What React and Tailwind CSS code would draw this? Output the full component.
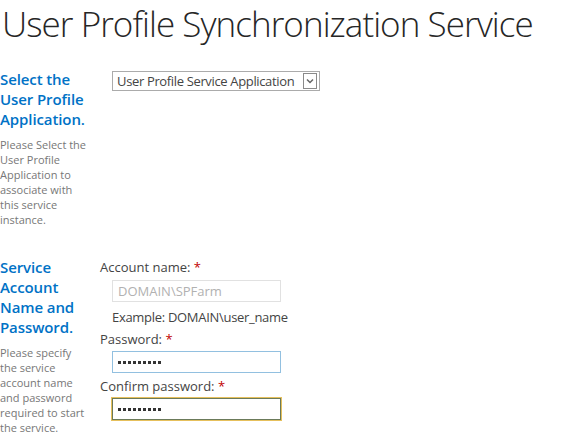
import React from "react";

const font = "font-['Open_Sans','Liberation_Sans',sans-serif]";

function SectionHead({ lines, desc }) {
  return (
    <div className="w-[100px] shrink-0 pr-[8px]">
      <div className="text-[15px] leading-[20px] font-semibold text-[#0072c6] tracking-[-0.1px]">
        {lines.map((l) => (
          <div key={l}>{l}</div>
        ))}
      </div>
      <div className="mt-[8px] text-[11px] leading-[15px] text-[#777]">
        {desc.map((l) => (
          <div key={l}>{l}</div>
        ))}
      </div>
    </div>
  );
}

function Label({ children }) {
  return (
    <div className="text-[13px] leading-[18px] text-[#444]">
      {children} <span className="text-[#bf0000]">*</span>
    </div>
  );
}

function Dots() {
  return (
    <div className="flex items-center gap-[2px]">
      {Array.from({ length: 9 }).map((_, i) => (
        <span key={i} className="block w-[3px] h-[3px] bg-[#333]" />
      ))}
    </div>
  );
}

export default function App() {
  return (
    <div className={`w-[581px] h-[440px] overflow-hidden bg-white ${font}`}>
      <h1 className="pl-[2px] pt-[1px] text-[35px] leading-[46px] font-light text-[#262626] tracking-[-0.95px] whitespace-nowrap">
        User Profile Synchronization Service
      </h1>

      {/* 选择应用 */}
      <div className="flex mt-[22px]">
        <SectionHead
          lines={["Select the", "User Profile", "Application."]}
          desc={[
            "Please Select the",
            "User Profile",
            "Application to",
            "associate with",
            "this service",
            "instance.",
          ]}
        />
        <div className="pl-[12px] pt-[2px]">
          <div className="flex items-center w-[208px] h-[20px] border border-[#ababab] pl-[4px] pr-[2px]">
            <span className="flex-1 text-[13px] leading-[18px] text-[#444] whitespace-nowrap tracking-[-0.35px]">
              User Profile Service Application
            </span>
            <span className="flex items-center justify-center w-[14px] h-[16px] border border-[#8a8a8a]">
              <svg width="8" height="6" viewBox="0 0 8 6">
                <path d="M1 1.5 L4 4.5 L7 1.5" fill="none" stroke="#666" strokeWidth="1.5" />
              </svg>
            </span>
          </div>
        </div>
      </div>

      {/* 服务账户 */}
      <div className="flex mt-[30px]">
        <SectionHead
          lines={["Service", "Account", "Name and", "Password."]}
          desc={[
            "Please specify",
            "the service",
            "account name",
            "and password",
            "required to start",
            "the service.",
          ]}
        />
        <div className="pt-[1px]">
          <Label>Account name:</Label>
          <div className="ml-[12px] mt-[4px] w-[169px] h-[22px] border border-[#e1e1e1] px-[5px] text-[13px] leading-[20px] text-[#b1b1b1]">
            DOMAIN\SPFarm
          </div>
          <div className="ml-[12px] mt-[6px] text-[13px] leading-[18px] text-[#444] tracking-[-0.3px]">
            Example: DOMAIN\user_name
          </div>
          <div className="mt-[4px]">
            <Label>Password:</Label>
          </div>
          <div className="ml-[12px] mt-[3px] w-[169px] h-[22px] border border-[#92c0e0] px-[5px] flex items-center">
            <Dots />
          </div>
          <div className="mt-[4px]">
            <Label>Confirm password:</Label>
          </div>
          <div className="ml-[11px] mt-[2px] w-[171px] h-[24px] border border-[#e6c05c]">
            <div className="w-full h-full border border-[#6b7a5a] px-[5px] flex items-center">
              <Dots />
            </div>
          </div>
        </div>
      </div>
    </div>
  );
}
